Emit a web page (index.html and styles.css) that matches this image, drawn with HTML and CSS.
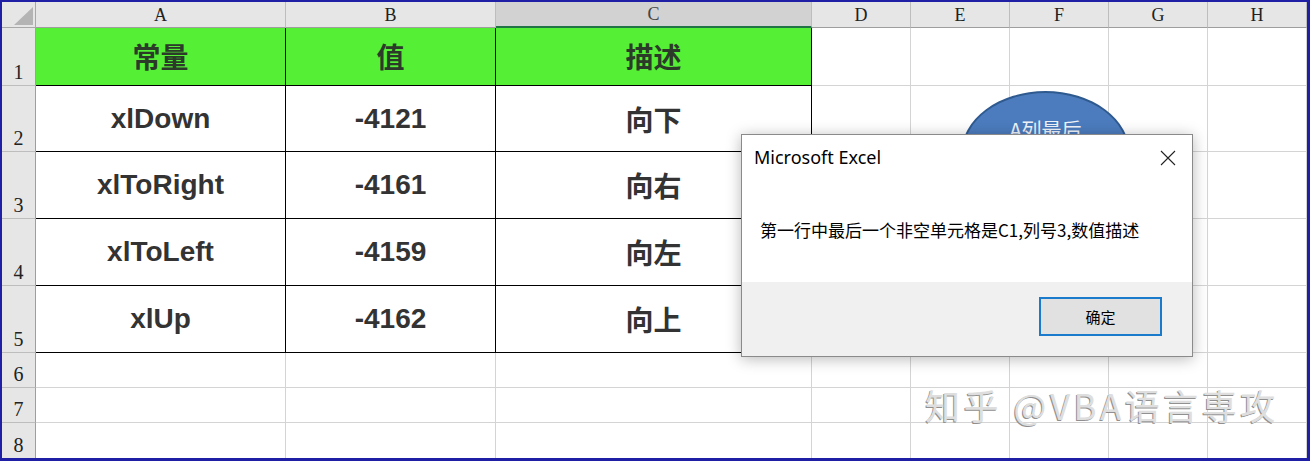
FILE: index.html
```html
<!DOCTYPE html>
<html lang="zh">
<head>
<meta charset="utf-8">
<title>Excel</title>
<link rel="stylesheet" href="styles.css">
</head>
<body>
<div class="frame">
  <div class="sheet">
    <div class="corner"><svg width="34" height="26" viewBox="0 0 34 26"><polygon points="12,23 31,23 31,5" fill="#b4b4b4"/></svg></div>
    <div class="colh">A</div>
    <div class="colh">B</div>
    <div class="colh sel">C</div>
    <div class="colh">D</div>
    <div class="colh">E</div>
    <div class="colh">F</div>
    <div class="colh">G</div>
    <div class="colh">H</div>

    <div class="rowh">1</div>
    <div class="cell tb th">常量</div>
    <div class="cell tb th">值</div>
    <div class="cell tb th">描述</div>
    <div class="cell"></div><div class="cell"></div><div class="cell"></div><div class="cell"></div><div class="cell"></div>

    <div class="rowh">2</div>
    <div class="cell tb">xlDown</div>
    <div class="cell tb">-4121</div>
    <div class="cell tb">向下</div>
    <div class="cell"></div><div class="cell"></div><div class="cell"></div><div class="cell"></div><div class="cell"></div>

    <div class="rowh">3</div>
    <div class="cell tb">xlToRight</div>
    <div class="cell tb">-4161</div>
    <div class="cell tb">向右</div>
    <div class="cell"></div><div class="cell"></div><div class="cell"></div><div class="cell"></div><div class="cell"></div>

    <div class="rowh">4</div>
    <div class="cell tb">xlToLeft</div>
    <div class="cell tb">-4159</div>
    <div class="cell tb">向左</div>
    <div class="cell"></div><div class="cell"></div><div class="cell"></div><div class="cell"></div><div class="cell"></div>

    <div class="rowh">5</div>
    <div class="cell tb">xlUp</div>
    <div class="cell tb">-4162</div>
    <div class="cell tb">向上</div>
    <div class="cell"></div><div class="cell"></div><div class="cell"></div><div class="cell"></div><div class="cell"></div>

    <div class="rowh">6</div>
    <div class="cell"></div><div class="cell"></div><div class="cell"></div><div class="cell"></div><div class="cell"></div><div class="cell"></div><div class="cell"></div><div class="cell"></div>
    <div class="rowh">7</div>
    <div class="cell"></div><div class="cell"></div><div class="cell"></div><div class="cell"></div><div class="cell"></div><div class="cell"></div><div class="cell"></div><div class="cell"></div>
    <div class="rowh">8</div>
    <div class="cell"></div><div class="cell"></div><div class="cell"></div><div class="cell"></div><div class="cell"></div><div class="cell"></div><div class="cell"></div><div class="cell"></div>
  </div>

  <div class="ellipse"><span>A列最后</span></div>

  <div class="watermark">知乎 @VBA语言専攻</div>

  <div class="dialog">
    <div class="dlg-body">
      <div class="dlg-title">
        <span>Microsoft Excel</span>
        <svg class="close" width="16" height="16" viewBox="0 0 16 16"><path d="M1 1 L15 15 M15 1 L1 15" stroke="#222" stroke-width="1.1" fill="none"/></svg>
      </div>
      <div class="dlg-msg">第一行中最后一个非空单元格是C1,列号3,数值描述</div>
    </div>
    <div class="dlg-foot">
      <button class="btn">确定</button>
    </div>
  </div>
</div>
</body>
</html>
```

FILE: styles.css
```css
* { box-sizing: border-box; }
html, body { margin: 0; padding: 0; background: #fff; }
.frame {
  position: relative;
  width: 1310px;
  height: 461px;
  border-style: solid;
  border-color: #1f1fa6;
  border-width: 2px 3px 3px 2px;
  overflow: hidden;
  background: #fff;
}
.sheet {
  display: grid;
  grid-template-columns: 34px 250px 210px 316px 99px 99px 99px 99px 99px;
  grid-template-rows: 26px 58px 66px 67px 67px 67px 35px 35px 36px;
}
.corner {
  background: #e6e6e6;
  border-right: 1px solid #a8a8a8;
  border-bottom: 1px solid #a8a8a8;
}
.corner svg { display: block; }
.colh {
  background: #e6e6e6;
  border-right: 1px solid #bdbdbd;
  border-bottom: 1px solid #9e9e9e;
  font-family: "Liberation Serif", "DejaVu Serif", serif;
  font-size: 18px;
  color: #222;
  display: flex;
  align-items: center;
  justify-content: center;
  padding-top: 1px;
}
.colh.sel {
  background: #d2d2d2;
  color: #444;
  border-bottom: 2px solid #217346;
}
.rowh {
  background: #e6e6e6;
  border-right: 1px solid #9e9e9e;
  border-bottom: 1px solid #bdbdbd;
  font-family: "Liberation Serif", "DejaVu Serif", serif;
  font-size: 20px;
  color: #222;
  display: flex;
  align-items: flex-end;
  justify-content: center;
  padding-bottom: 1px;
}
.cell {
  border-right: 1px solid #d4d4d4;
  border-bottom: 1px solid #d4d4d4;
}
.cell.tb {
  border-right-color: #000;
  border-bottom-color: #000;
  display: flex;
  align-items: center;
  justify-content: center;
  font-family: "Liberation Sans", "Noto Sans CJK SC", sans-serif;
  font-weight: bold;
  font-size: 28px;
  color: #333;
}
.cell.th {
  background: #55ef35;
  color: #2c3a2a;
  font-family: "Noto Sans CJK SC", sans-serif;
  font-size: 28px;
  padding-bottom: 2px;
}
.ellipse {
  position: absolute;
  left: 959px;
  top: 89px;
  width: 169px;
  height: 126px;
  border-radius: 50%;
  background: #4c7cbe;
  border: 2px solid #2f5a90;
  text-align: center;
  padding-top: 22px;
  font-family: "Noto Sans CJK SC", sans-serif;
  font-size: 20px;
  color: #f0f4fa;
}
.watermark {
  position: absolute;
  left: 923px;
  top: 377px;
  font-family: "Noto Sans CJK SC", sans-serif;
  font-size: 35px;
  letter-spacing: 3.5px;
  color: #dedede;
  text-shadow: -1px 1px 0 #909090;
  white-space: nowrap;
}
.dialog {
  position: absolute;
  left: 739px;
  top: 132px;
  width: 452px;
  height: 223px;
  border: 1px solid #8a8a8a;
  background: #fff;
  box-shadow: 0 2px 14px rgba(0,0,0,0.28);
  display: flex;
  flex-direction: column;
  font-family: "Noto Sans CJK SC", "Noto Sans", sans-serif;
}
.dlg-body {
  height: 147px;
  background: #fff;
}
.dlg-title {
  display: flex;
  justify-content: space-between;
  align-items: center;
  padding: 8px 16px 0 12px;
  font-family: "Noto Sans", "Open Sans", sans-serif;
  font-size: 18px;
  color: #000;
  height: 36px;
}
.close { margin-top: 1px; }
.dlg-msg {
  padding: 46px 0 0 18px;
  font-size: 17px;
  color: #000;
  white-space: nowrap;
}
.dlg-foot {
  flex: 1;
  background: #f0f0f0;
  display: flex;
  justify-content: flex-end;
  align-items: flex-start;
  padding: 15px 30px 0 0;
}
.btn {
  width: 123px;
  height: 39px;
  border: 2px solid #1a7acb;
  background: #e1e1e1;
  font-family: "Noto Sans CJK SC", sans-serif;
  font-size: 15px;
  color: #000;
  padding: 0;
}
```
